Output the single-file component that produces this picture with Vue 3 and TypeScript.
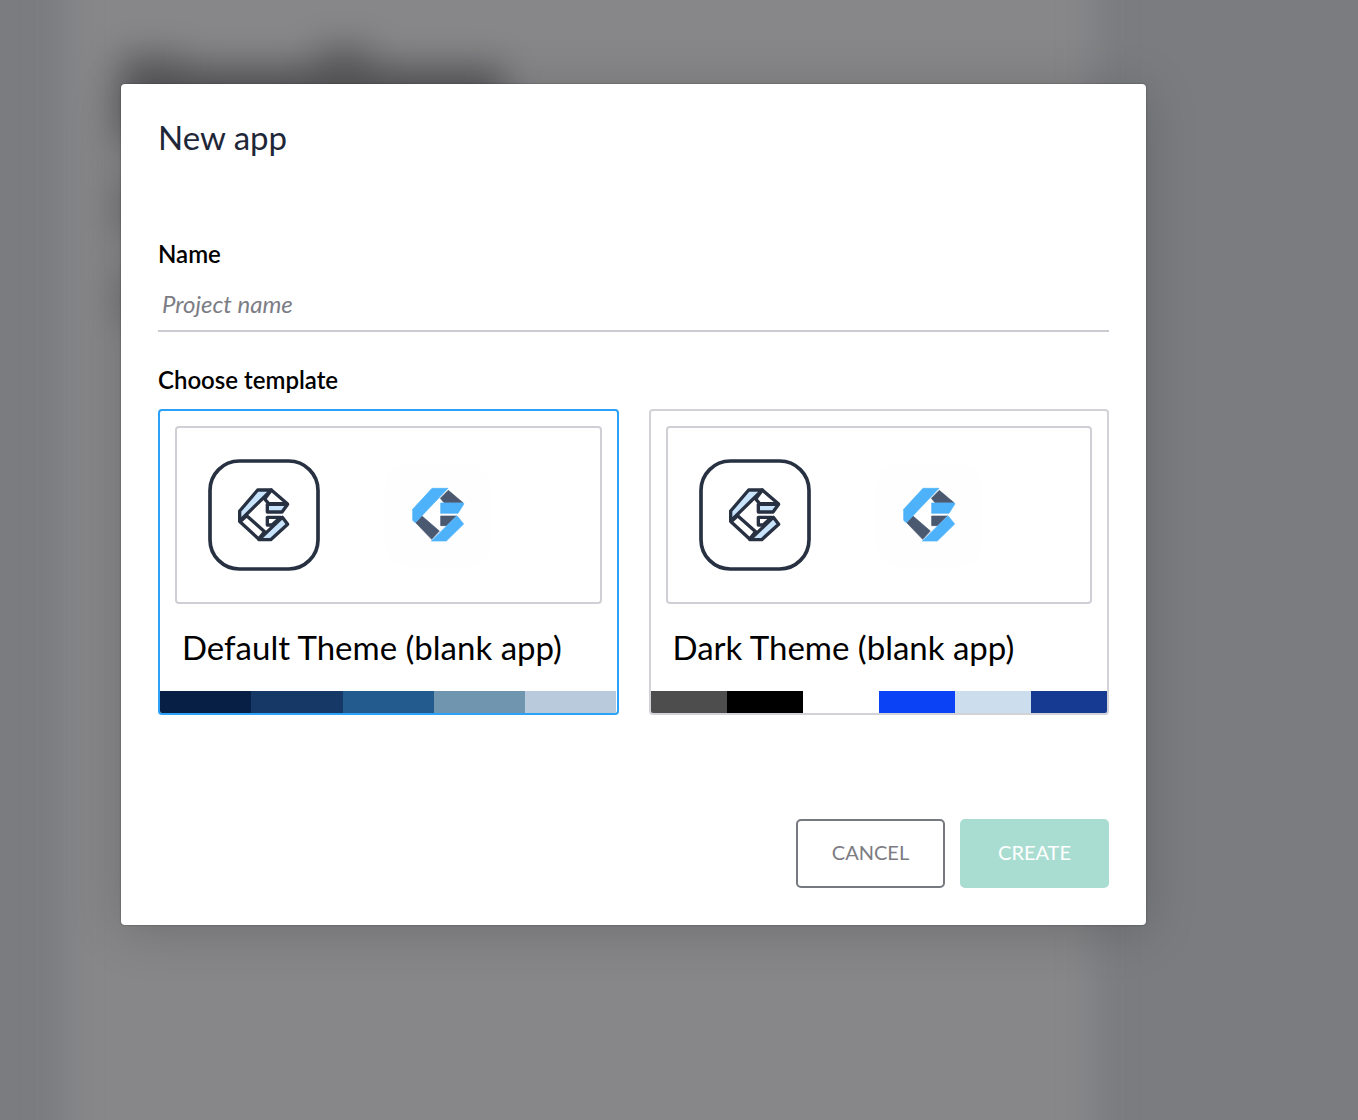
<script setup lang="ts">
import { ref } from 'vue'

interface Template {
  id: string
  name: string
  colors: string[]
}

const templates: Template[] = [
  {
    id: 'default',
    name: 'Default Theme (blank app)',
    colors: ['#071e45', '#163866', '#245b8f', '#7095ae', '#b8cadc'],
  },
  {
    id: 'dark',
    name: 'Dark Theme (blank app)',
    colors: ['#4d4d4d', '#000000', '#ffffff', '#0b42f6', '#ccdded', '#163a91'],
  },
]

const projectName = ref('')
const selected = ref('default')
</script>

<template>
  <div class="screen">
    <div class="backdrop" aria-hidden="true">
      <div class="page">
        <div class="page-heading">
          <span class="tall"></span>
          <span class="wide"></span>
          <span class="tallest"></span>
          <span class="wide"></span>
        </div>
        <div class="page-line"></div>
        <div class="page-line"></div>
      </div>
    </div>

    <form class="dialog" role="dialog" aria-labelledby="dialog-title" @submit.prevent>
      <h1 id="dialog-title" class="title">New app</h1>

      <label class="label" for="project-name">Name</label>
      <input
        id="project-name"
        v-model="projectName"
        class="name-input"
        type="text"
        placeholder="Project name"
      />

      <fieldset class="templates">
        <legend class="label">Choose template</legend>
        <div class="cards">
          <label
            v-for="item in templates"
            :key="item.id"
            class="card"
            :class="{ selected: selected === item.id }"
          >
            <input v-model="selected" class="radio" type="radio" name="template" :value="item.id" />
            <span class="preview">
              <svg class="logo" viewBox="24 24 336 336" aria-hidden="true">
                <rect x="30" y="30" width="324" height="324" rx="88" fill="#fff" stroke="#273142" stroke-width="11" />
                <g stroke="#273142" stroke-width="10" stroke-linejoin="round">
                  <path fill="#fff" d="M214 117 262 158H206L194 144Z" />
                  <path fill="#fff" d="M140 194 194 242 176 264 120 212Z" />
                  <path fill="#c8e4fc" d="M173 117H214L119 210V180Z" />
                  <path fill="#c8e4fc" d="M202 160H263L246 183H202Z" />
                  <path fill="#fff" d="M202 199H242L216 222H202Z" />
                  <path fill="#c8e4fc" d="M247 199 263 220 212 266H177Z" />
                </g>
              </svg>
              <svg class="logo" viewBox="6 24 336 336" aria-hidden="true">
                <rect x="16" y="36" width="316" height="312" rx="72" fill="#fefefe" />
                <path fill="#fff" d="M180 142 192 156H181V225L178 240 125 194Z" />
                <g stroke-linejoin="round" stroke-width="2">
                  <path fill="#4a5870" stroke="#4a5870" d="M205 118 249 155H192L181 142Z" />
                  <path fill="#4a5870" stroke="#4a5870" d="M126 195 178 240 155 265 107 215Z" />
                  <path fill="#4a5870" stroke="#4a5870" d="M182 195H229L200 224H182Z" />
                  <path fill="#4db2fa" stroke="#4db2fa" d="M156 112H204L106 215 98 208V175Z" />
                  <path fill="#4db2fa" stroke="#4db2fa" d="M182 156H251V160L234 187H182Z" />
                  <path fill="#4db2fa" stroke="#4db2fa" d="M231 194 251 219 199 270H154Z" />
                </g>
              </svg>
            </span>
            <span class="card-name">{{ item.name }}</span>
            <span class="swatches">
              <span
                v-for="color in item.colors"
                :key="color"
                class="swatch"
                :style="{ backgroundColor: color }"
              ></span>
            </span>
          </label>
        </div>
      </fieldset>

      <div class="actions">
        <button class="button cancel" type="button">CANCEL</button>
        <button class="button create" type="submit">CREATE</button>
      </div>
    </form>
  </div>
</template>

<style>
body {
  margin: 0;
}
</style>

<style scoped>
.screen {
  position: relative;
  box-sizing: border-box;
  min-height: 100vh;
  padding: 84px 212px 84px 121px;
  background: #7b7c80;
  color: #000;
  font-family: Lato, 'Open Sans', sans-serif;
}

.backdrop {
  position: absolute;
  inset: 0;
  overflow: hidden;
}

.page {
  box-sizing: border-box;
  height: 120%;
  margin: -80px 262px 0 64px;
  padding: 124px 56px;
  background: #878789;
  filter: blur(18px);
}

/* Out-of-focus heading behind the dialog */
.page-heading {
  display: flex;
  align-items: flex-end;
  width: 384px;
  height: 92px;
}

.page-heading span {
  background: #58585a;
}

.page-heading .tall {
  width: 64px;
  height: 80px;
}

.page-heading .wide {
  flex: 1;
  height: 70px;
}

.page-heading .tallest {
  width: 56px;
  height: 88px;
}

.page-line {
  width: 60%;
  height: 40px;
  margin-top: 52px;
  background: #6c6c6e;
}

.dialog {
  position: relative;
  box-sizing: border-box;
  padding: 36px 37px 37px;
  border-radius: 4px;
  background: #fff;
  box-shadow: 0 0 2px rgba(0, 0, 0, 0.4), 0 6px 52px rgba(0, 0, 0, 0.18);
}

.title {
  margin: 0 0 88px;
  color: #1e2738;
  font-size: 33px;
  font-weight: 400;
  line-height: 34px;
}

.label {
  display: block;
  padding: 0;
  font-size: 24px;
  font-weight: 600;
  line-height: 24px;
}

.name-input {
  display: block;
  box-sizing: border-box;
  width: 100%;
  height: 52px;
  margin: 14px 0 36px;
  padding: 0 4px 4px;
  border: 0;
  border-bottom: 2px solid #cbccd1;
  outline: 0;
  background: transparent;
  color: #000;
  font-family: inherit;
  font-size: 24px;
}

.name-input::placeholder {
  color: #7c7d85;
  font-style: italic;
  opacity: 1;
}

.templates {
  min-width: 0;
  margin: 0;
  padding: 0;
  border: 0;
}

.cards {
  display: grid;
  grid-template-columns: 1fr 1fr;
  gap: 30px;
  margin-top: 17px;
}

.card {
  position: relative;
  display: flex;
  flex-direction: column;
  overflow: hidden;
  border: 2px solid #d2d2d7;
  border-radius: 4px;
  cursor: pointer;
}

.card.selected {
  border-color: #2ba1f8;
}

.radio {
  position: absolute;
  margin: 0;
  opacity: 0;
}

.preview {
  display: flex;
  gap: 62px;
  margin: 15px 15px 0;
  padding: 31px;
  border: 2px solid #cfd0d5;
  border-radius: 4px;
}

.logo {
  flex: none;
  width: 112px;
  height: 112px;
}

.card-name {
  padding: 23px 22px 24px;
  font-size: 33px;
  line-height: 40px;
  white-space: nowrap;
}

.swatches {
  display: flex;
  height: 22px;
}

.swatch {
  flex: 1;
}

.actions {
  display: flex;
  justify-content: flex-end;
  gap: 15px;
  margin-top: 104px;
}

.button {
  box-sizing: border-box;
  width: 149px;
  height: 69px;
  padding: 0 0 4px;
  border: 2px solid #777981;
  border-radius: 5px;
  background: #fff;
  color: #7c7c82;
  font-family: inherit;
  font-size: 20px;
  cursor: pointer;
}

.create {
  border-color: #aaddd1;
  background: #aaddd1;
  color: #fff;
}
</style>
